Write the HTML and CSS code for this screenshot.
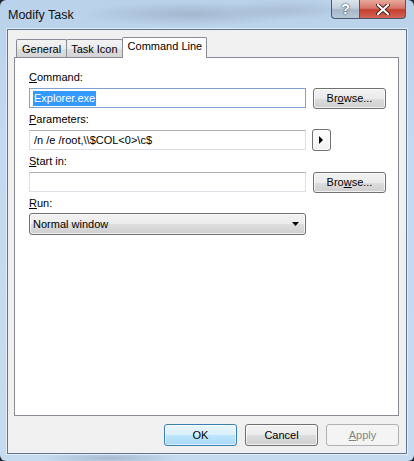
FILE: index.html
```html
<!DOCTYPE html>
<html lang="en">
<head>
  <meta charset="UTF-8" />
  <title>Modify Task</title>
  <link rel="stylesheet" href="styles.css">
</head>
<body>

<div class="window">
  <div class="titlebar">
    <span class="title">Modify Task</span>
    <div class="caption-btns">
      <div class="cap help">?</div>
      <div class="cap close">
        <svg width="14" height="11" viewBox="0 0 14 11">
          <path d="M2 1 L12 10 M12 1 L2 10" stroke="#4a1b16" stroke-width="4" stroke-linecap="round"/>
          <path d="M2 1 L12 10 M12 1 L2 10" stroke="#fff" stroke-width="2.2" stroke-linecap="round"/>
        </svg>
      </div>
    </div>
  </div>

  <div class="client">
    <div class="tabs">
      <div class="tab">General</div>
      <div class="tab">Task Icon</div>
      <div class="tab active">Command Line</div>
    </div>

    <div class="panel">
      <div class="field">
        <label><u>C</u>ommand:</label>
        <div class="row">
          <div class="input focused"><span class="sel">Explorer.exe</span></div>
          <div class="btn">Br<u>o</u>wse...</div>
        </div>
      </div>

      <div class="field">
        <label><u>P</u>arameters:</label>
        <div class="row">
          <div class="input">/n /e /root,\\$COL&lt;0&gt;\c$</div>
          <div class="btn arrow">
            <svg width="5" height="8" viewBox="0 0 5 8"><path d="M0 0 L4 4 L0 8 Z" fill="#000"/></svg>
          </div>
        </div>
      </div>

      <div class="field">
        <label><u>S</u>tart in:</label>
        <div class="row">
          <div class="input"></div>
          <div class="btn">Bro<u>w</u>se...</div>
        </div>
      </div>

      <div class="field">
        <label><u>R</u>un:</label>
        <div class="row">
          <div class="select">
            <span>Normal window</span>
            <svg width="7" height="4" viewBox="0 0 7 4"><path d="M0 0 L7 0 L3.5 4 Z" fill="#000"/></svg>
          </div>
        </div>
      </div>
    </div>

    <div class="footer">
      <div class="btn default">OK</div>
      <div class="btn">Cancel</div>
      <div class="btn disabled"><u>A</u>pply</div>
    </div>
  </div>
</div>

</body>
</html>
```

FILE: styles.css
```css
body {
  margin: 0;
  background: #1d2733;
  font-family: "Liberation Sans", Arial, sans-serif;
  font-size: 11px;
  color: #000;
}

.window {
  width: 414px;
  height: 461px;
  box-sizing: border-box;
  padding: 0 7px 7px 7px;
  border-radius: 6px;
  background:
    radial-gradient(ellipse 110px 12px at 190px 14px, rgba(120, 135, 155, 0.35), transparent),
    radial-gradient(ellipse 60px 10px at 290px 10px, rgba(140, 150, 165, 0.3), transparent),
    radial-gradient(ellipse 70px 6px at 110px 458px, rgba(110, 125, 145, 0.35), transparent),
    linear-gradient(to bottom, #b9d1ea 0%, #c3d9ef 30%, #c6dbf0 100%);
  display: flex;
  flex-direction: column;
}

.titlebar {
  height: 29px;
  display: flex;
  justify-content: space-between;
  align-items: flex-start;
  margin-right: 1px;
}

.title {
  font-size: 12.5px;
  line-height: 30px;
  padding-left: 1px;
  color: #111;
}

.caption-btns {
  display: flex;
}

.cap {
  height: 19px;
  box-sizing: border-box;
  border: 1px solid #4a5a6c;
  border-top: none;
  display: flex;
  align-items: center;
  justify-content: center;
}

.help {
  width: 28px;
  border-radius: 0 0 0 4px;
  border-right: none;
  background: linear-gradient(to bottom, #dbe4ee 0%, #c3d0dd 45%, #a6b7c9 55%, #b7c8d9 100%);
  color: #fff;
  font-size: 14px;
  font-weight: bold;
  text-shadow: 0 0 2px #3b4d60, 0 0 1px #3b4d60;
}

.close {
  width: 47px;
  border-radius: 0 0 4px 0;
  background: linear-gradient(to bottom, #e8a99d 0%, #d6786b 45%, #c4402f 55%, #d3665a 100%);
}

.client {
  flex: 1;
  background: #f0f0f0;
  border: 1px solid #5d7590;
  box-shadow: 0 0 0 1px rgba(255, 255, 255, 0.55);
  padding: 7px 7px 7px 6px;
  display: flex;
  flex-direction: column;
}

.tabs {
  display: flex;
  align-items: flex-end;
  padding-left: 2px;
  height: 20px;
  position: relative;
  z-index: 1;
}

.tab {
  height: 18px;
  box-sizing: border-box;
  border: 1px solid #898c95;
  border-bottom: none;
  margin-right: -1px;
  padding: 0 5px 0 5px;
  line-height: 18px;
  background: linear-gradient(to bottom, #f3f3f3 0%, #ebebeb 50%, #dedede 51%, #d4d4d4 100%);
  border-radius: 2px 2px 0 0;
  white-space: nowrap;
}

.tab:nth-child(2) {
  padding: 0 4px;
}

.tab.active {
  height: 21px;
  margin: 0 -2px -1px 0;
  padding: 0 4px 0 5px;
  line-height: 17px;
  background: #fff;
}

.panel {
  height: 359px;
  box-sizing: border-box;
  border: 1px solid #898c95;
  background: #fff;
  padding: 12px 0 0 14px;
}

.field {
  margin-bottom: 4px;
}

.field label {
  display: block;
  height: 15px;
  line-height: 15px;
  margin-bottom: 3px;
}

.row {
  display: flex;
  align-items: center;
  gap: 7px;
  height: 20px;
}

.input {
  width: 277px;
  height: 20px;
  box-sizing: border-box;
  border: 1px solid #dbdfe6;
  border-top-color: #abadb3;
  padding: 0 4px;
  line-height: 18px;
  white-space: nowrap;
  color: #000;
}

.input.focused {
  border-color: #7da2ce;
  padding-left: 3px;
}

.sel {
  background: #3399ff;
  color: #fff;
  padding: 1px 1px 2px 1px;
}

.btn {
  width: 73px;
  height: 21px;
  flex: none;
  box-sizing: border-box;
  border: 1px solid #707070;
  border-radius: 3px;
  background: linear-gradient(to bottom, #f2f2f2 0%, #ebebeb 50%, #dddddd 51%, #cfcfcf 100%);
  box-shadow: inset 0 0 0 1px rgba(255, 255, 255, 0.7);
  display: flex;
  align-items: center;
  justify-content: center;
}

.btn.arrow {
  width: 19px;
  height: 22px;
  margin-left: -1px;
  background: linear-gradient(to bottom, #fdfdfd, #f1f1f1);
}

.select {
  width: 277px;
  height: 22px;
  flex: none;
  box-sizing: border-box;
  border: 1px solid #707070;
  border-radius: 3px;
  background: linear-gradient(to bottom, #f2f2f2 0%, #ebebeb 50%, #dddddd 51%, #cfcfcf 100%);
  box-shadow: inset 0 0 0 1px rgba(255, 255, 255, 0.7);
  display: flex;
  align-items: center;
  justify-content: space-between;
  padding: 0 6px 0 3px;
}

.footer {
  display: flex;
  justify-content: flex-end;
  gap: 8px;
  margin-top: 8px;
}

.footer .btn {
  height: 22px;
}

.btn.default {
  border-color: #3c7fb1;
  background: linear-gradient(to bottom, #eaf6fd 0%, #d9f0fc 50%, #bee6fd 51%, #a7d9f5 100%);
  box-shadow: inset 0 0 0 1px rgba(255, 255, 255, 0.6);
}

.btn.disabled {
  border-color: #adb2b5;
  background: #f4f4f4;
  box-shadow: none;
  color: #838383;
}
```
